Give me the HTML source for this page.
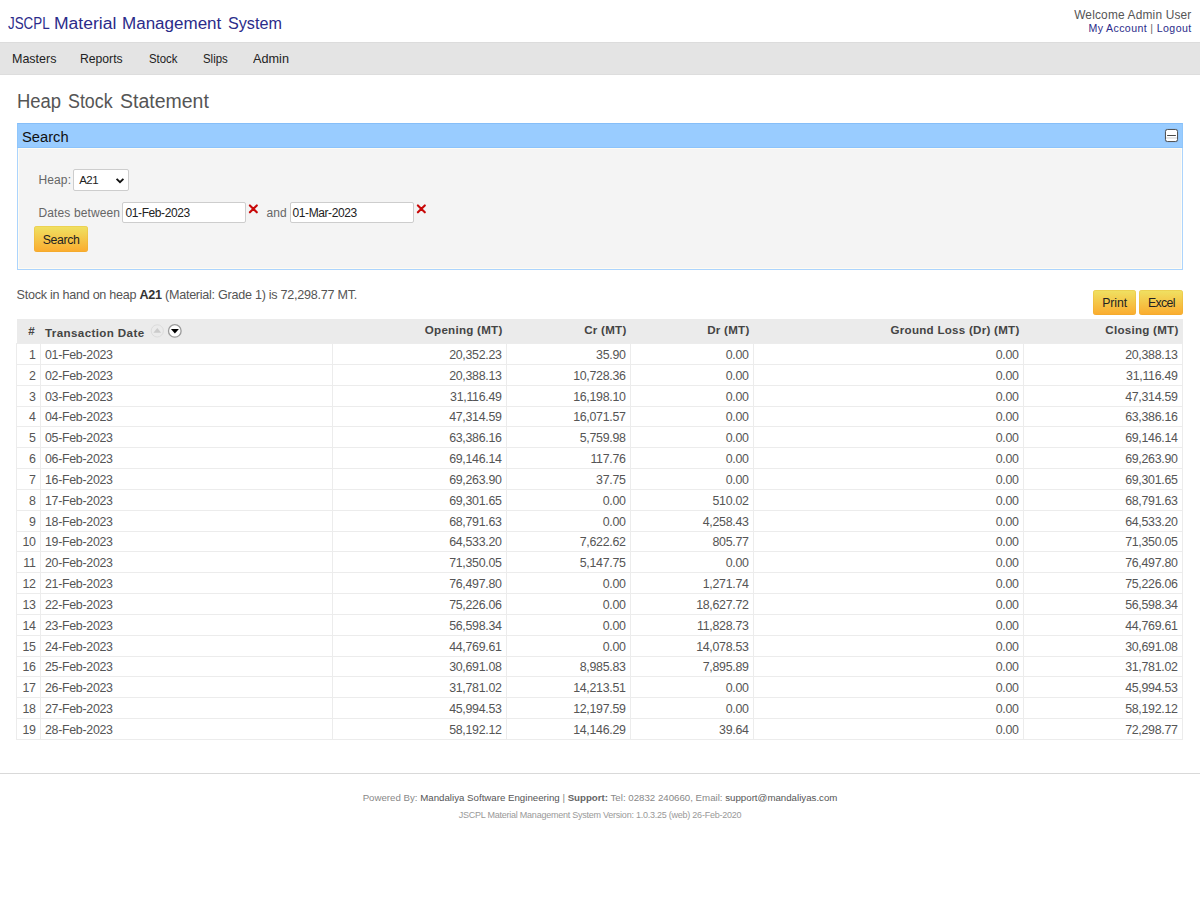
<!DOCTYPE html>
<html><head><meta charset="utf-8"><title>Heap Stock Statement</title>
<style>
*{box-sizing:border-box}
html,body{margin:0;padding:0;background:#fff}
body{font-family:"Liberation Sans",sans-serif;font-size:12px;color:#555;width:1200px;height:900px;position:relative;overflow:hidden}
.t,.abs{position:absolute;white-space:nowrap}
.lk{color:#2b2b8a}
#nav{left:0;top:41.6px;width:1200px;height:33.4px;background:#e4e4e4;border-top:1px solid #dcdcdc;border-bottom:1px solid #dddddd}
#shead{left:16.8px;top:123px;width:1166.2px;height:25px;background:#99ccff;border-top:1px solid #86bef8;border-bottom:1px solid #8cc3fb;border-left:1px solid #90c6fb;border-right:1px solid #90c6fb}
#sbody{left:16.8px;top:148px;width:1166.2px;height:121.5px;background:#f4f4f4;border:1px solid #acd4fd;border-top:none;box-shadow:inset 0 1px 0 #fffcf3,inset 1px 0 0 #fffcf3,inset -1px 0 0 #fffcf3,inset 0 -1px 0 #fffcf3}
#collapse{left:1165px;top:129px;width:13.3px;height:13.4px;background:linear-gradient(#fff 0%,#fff 62%,#e4e4e4 63%,#e9e9e9 80%,#fff 81%);border:1px solid #555;border-radius:2.5px;box-shadow:0 0 0.7px #555}
#collapse i{position:absolute;left:1.2px;top:4.7px;width:8.8px;height:1.7px;background:#4a4a4a;border-radius:1px}
.box{position:absolute;background:#fff;border:1px solid #cdcdcd}
.xic{position:absolute}
.btn{position:absolute;background:linear-gradient(#efe263,#fbab2e);border-radius:3px;box-shadow:inset 0 0 0 0.5px rgba(230,170,40,0.5)}
table{position:absolute;left:16px;top:319.1px;border-collapse:collapse;width:1166px;table-layout:fixed}
th{background:#ebebeb;color:#444;font-weight:bold;font-size:11.6px;letter-spacing:0.25px;height:24.5px;text-align:right;padding:0 4px 2px 4.5px;white-space:nowrap;vertical-align:middle;line-height:12px}
td{height:20.83px;border:1px solid #ececec;font-size:12.4px;letter-spacing:-0.3px;color:#555;text-align:right;padding:2px 4.4px 0 4px;white-space:nowrap;line-height:14px}
td.l,th.l{text-align:left}
#foot{left:0;top:772.8px;width:1200px;height:1.2px;background:#d9d9d9}
.ft{left:0;width:1200px;text-align:center;color:#888}
.ft span{color:#555}
.ft b{color:#666}
</style></head><body>
<div id="nav" class="abs"></div>
<div id="shead" class="abs"></div>
<div id="sbody" class="abs"></div>
<div id="collapse" class="abs"><i></i></div>
<div class="box" style="left:73px;top:169px;width:56px;height:22px;border-radius:2px"></div>
<svg class="abs" style="left:114px;top:176px" width="12" height="9" viewBox="0 0 12 9"><path d="M2.6 2.9 L6 6.1 L9.4 2.9" fill="none" stroke="#111" stroke-width="1.9"/></svg>
<div class="box" style="left:122px;top:202px;width:124px;height:21px;border-radius:2px"></div>
<div class="box" style="left:290px;top:202px;width:124px;height:21px;border-radius:2px"></div>
<svg class="xic" style="left:248px;top:203.5px" width="11" height="10.5" viewBox="0 0 11 10.5"><path d="M1.9 1.4 L8.8 8.3 M8.8 1.4 L1.9 8.3" stroke="#c80808" stroke-width="2.1" stroke-linecap="round"/></svg>
<svg class="xic" style="left:415.5px;top:203.9px" width="11" height="10.5" viewBox="0 0 11 10.5"><path d="M1.9 1.4 L8.8 8.3 M8.8 1.4 L1.9 8.3" stroke="#c80808" stroke-width="2.1" stroke-linecap="round"/></svg>
<div class="btn" style="left:34px;top:226px;width:53.5px;height:26px"></div>
<div class="btn" style="left:1093.3px;top:289.9px;width:42.3px;height:25px"></div>
<div class="btn" style="left:1139.3px;top:289.9px;width:43.9px;height:25px"></div>
<table>
<colgroup><col style="width:24px"><col style="width:292px"><col style="width:174px"><col style="width:124px"><col style="width:123px"><col style="width:270px"><col style="width:159px"></colgroup>
<thead><tr><th style="padding-right:5.5px;padding-bottom:0.5px">#</th><th class=l><span style="position:relative;top:3.2px;letter-spacing:0.38px">Transaction Date</span></th><th>Opening (MT)</th><th>Cr (MT)</th><th>Dr (MT)</th><th>Ground Loss (Dr) (MT)</th><th>Closing (MT)</th></tr></thead>
<tbody>
<tr><td>1</td><td class=l>01-Feb-2023</td><td>20,352.23</td><td>35.90</td><td>0.00</td><td>0.00</td><td>20,388.13</td></tr>
<tr><td>2</td><td class=l>02-Feb-2023</td><td>20,388.13</td><td>10,728.36</td><td>0.00</td><td>0.00</td><td>31,116.49</td></tr>
<tr><td>3</td><td class=l>03-Feb-2023</td><td>31,116.49</td><td>16,198.10</td><td>0.00</td><td>0.00</td><td>47,314.59</td></tr>
<tr><td>4</td><td class=l>04-Feb-2023</td><td>47,314.59</td><td>16,071.57</td><td>0.00</td><td>0.00</td><td>63,386.16</td></tr>
<tr><td>5</td><td class=l>05-Feb-2023</td><td>63,386.16</td><td>5,759.98</td><td>0.00</td><td>0.00</td><td>69,146.14</td></tr>
<tr><td>6</td><td class=l>06-Feb-2023</td><td>69,146.14</td><td>117.76</td><td>0.00</td><td>0.00</td><td>69,263.90</td></tr>
<tr><td>7</td><td class=l>16-Feb-2023</td><td>69,263.90</td><td>37.75</td><td>0.00</td><td>0.00</td><td>69,301.65</td></tr>
<tr><td>8</td><td class=l>17-Feb-2023</td><td>69,301.65</td><td>0.00</td><td>510.02</td><td>0.00</td><td>68,791.63</td></tr>
<tr><td>9</td><td class=l>18-Feb-2023</td><td>68,791.63</td><td>0.00</td><td>4,258.43</td><td>0.00</td><td>64,533.20</td></tr>
<tr><td>10</td><td class=l>19-Feb-2023</td><td>64,533.20</td><td>7,622.62</td><td>805.77</td><td>0.00</td><td>71,350.05</td></tr>
<tr><td>11</td><td class=l>20-Feb-2023</td><td>71,350.05</td><td>5,147.75</td><td>0.00</td><td>0.00</td><td>76,497.80</td></tr>
<tr><td>12</td><td class=l>21-Feb-2023</td><td>76,497.80</td><td>0.00</td><td>1,271.74</td><td>0.00</td><td>75,226.06</td></tr>
<tr><td>13</td><td class=l>22-Feb-2023</td><td>75,226.06</td><td>0.00</td><td>18,627.72</td><td>0.00</td><td>56,598.34</td></tr>
<tr><td>14</td><td class=l>23-Feb-2023</td><td>56,598.34</td><td>0.00</td><td>11,828.73</td><td>0.00</td><td>44,769.61</td></tr>
<tr><td>15</td><td class=l>24-Feb-2023</td><td>44,769.61</td><td>0.00</td><td>14,078.53</td><td>0.00</td><td>30,691.08</td></tr>
<tr><td>16</td><td class=l>25-Feb-2023</td><td>30,691.08</td><td>8,985.83</td><td>7,895.89</td><td>0.00</td><td>31,781.02</td></tr>
<tr><td>17</td><td class=l>26-Feb-2023</td><td>31,781.02</td><td>14,213.51</td><td>0.00</td><td>0.00</td><td>45,994.53</td></tr>
<tr><td>18</td><td class=l>27-Feb-2023</td><td>45,994.53</td><td>12,197.59</td><td>0.00</td><td>0.00</td><td>58,192.12</td></tr>
<tr><td>19</td><td class=l>28-Feb-2023</td><td>58,192.12</td><td>14,146.29</td><td>39.64</td><td>0.00</td><td>72,298.77</td></tr>
</tbody></table>
<svg class="abs" style="left:149px;top:323px" width="34" height="16" viewBox="0 0 34 16">
<circle cx="8.3" cy="7.9" r="6.1" fill="none" stroke="#dcdcdc" stroke-width="1"/>
<path d="M4.4 9.8 L8.3 4.9 L12.2 9.8 Z" fill="#cbcbcb"/>
<circle cx="25.8" cy="7.9" r="6.3" fill="#fff" stroke="#9a9a9a" stroke-width="1.3"/>
<path d="M21.9 6.1 L29.9 6.1 L25.9 10.4 Z" fill="#000"/>
</svg>
<div class="t" style="right:8.5px;text-align:right;top:10.13px;font-size:11.9px;line-height:11.9px;color:#555;letter-spacing:0.18px">Welcome Admin User</div>
<div class="t" style="right:8.5px;text-align:right;top:23.03px;font-size:10.6px;line-height:10.6px;color:#2b2b8a;letter-spacing:0.38px"><span class=lk>My Account</span> <span style="color:#666">|</span> <span class=lk>Logout</span></div>
<div class="t" style="left:38.5px;top:173.84px;font-size:12px;line-height:12px;color:#666;letter-spacing:0.12px">Heap:</div>
<div class="t" style="left:79.2px;top:174.57px;font-size:11.5px;line-height:11.5px;color:#222;letter-spacing:-0.5px">A21</div>
<div class="t" style="left:38.5px;top:206.54px;font-size:12px;line-height:12px;color:#666;letter-spacing:0.12px">Dates between</div>
<div class="t" style="left:125.5px;top:206.54px;font-size:12px;line-height:12px;color:#222;letter-spacing:-0.4px">01-Feb-2023</div>
<div class="t" style="left:266.5px;top:206.54px;font-size:12px;line-height:12px;color:#666;letter-spacing:0.12px">and</div>
<div class="t" style="left:292.5px;top:206.54px;font-size:12px;line-height:12px;color:#222;letter-spacing:-0.4px">01-Mar-2023</div>
<div class="t" style="left:42.8px;top:233.59px;font-size:12.3px;line-height:12.3px;color:#222;letter-spacing:-0.4px">Search</div>
<div class="t" style="left:16.6px;top:289.03px;font-size:12.6px;line-height:12.6px;color:#555;letter-spacing:-0.27px">Stock in hand on heap <b style="color:#333">A21</b> (Material: Grade 1) is 72,298.77 MT.</div>
<div class="t" style="left:1102.2px;top:296.79px;font-size:12.3px;line-height:12.3px;color:#222;letter-spacing:-0.1px">Print</div>
<div class="t" style="left:1148.1px;top:296.79px;font-size:12.3px;line-height:12.3px;color:#222;letter-spacing:-0.7px">Excel</div>
<div class="t" style="left:0;width:1200px;text-align:center;top:792.79px;font-size:9.7px;line-height:9.7px;letter-spacing:0px;color:#888">Powered By: <span style="color:#555">Mandaliya Software Engineering</span> | <b style="color:#666">Support:</b> Tel: 02832 240660, Email: <span style="color:#555">support@mandaliyas.com</span></div>
<div class="t" style="left:0;width:1200px;text-align:center;top:810.58px;font-size:9px;line-height:9px;letter-spacing:-0.24px;color:#999">JSCPL Material Management System Version: 1.0.3.25 (web) 26-Feb-2020</div>
<div class="t" style="left:7.50px;top:15.06px;font-size:17.3px;line-height:17.3px;color:#2b2b8a;font-weight:normal;transform-origin:0 0;transform:scaleX(0.7734);">JSCPL</div>
<div class="t" style="left:54.49px;top:15.06px;font-size:17.3px;line-height:17.3px;color:#2b2b8a;font-weight:normal;transform-origin:0 0;transform:scaleX(1.0147);">Material</div>
<div class="t" style="left:121.52px;top:15.06px;font-size:17.3px;line-height:17.3px;color:#2b2b8a;font-weight:normal;transform-origin:0 0;transform:scaleX(0.9843);">Management</div>
<div class="t" style="left:227.50px;top:15.06px;font-size:17.3px;line-height:17.3px;color:#2b2b8a;font-weight:normal;transform-origin:0 0;transform:scaleX(0.9350);">System</div>
<div class="t" style="left:11.57px;top:51.66px;font-size:13.4px;line-height:13.4px;color:#222;font-weight:normal;transform-origin:0 0;transform:scaleX(0.9324);">Masters</div>
<div class="t" style="left:80.34px;top:51.66px;font-size:13.4px;line-height:13.4px;color:#222;font-weight:normal;transform-origin:0 0;transform:scaleX(0.9093);">Reports</div>
<div class="t" style="left:148.75px;top:51.66px;font-size:13.4px;line-height:13.4px;color:#222;font-weight:normal;transform-origin:0 0;transform:scaleX(0.8507);">Stock</div>
<div class="t" style="left:202.50px;top:51.66px;font-size:13.4px;line-height:13.4px;color:#222;font-weight:normal;transform-origin:0 0;transform:scaleX(0.8524);">Slips</div>
<div class="t" style="left:252.50px;top:51.66px;font-size:13.4px;line-height:13.4px;color:#222;font-weight:normal;transform-origin:0 0;transform:scaleX(0.9465);">Admin</div>
<div class="t" style="left:16.98px;top:90.57px;font-size:20px;line-height:20px;color:#555;font-weight:normal;transform-origin:0 0;transform:scaleX(0.9231);">Heap</div>
<div class="t" style="left:67.75px;top:90.57px;font-size:20px;line-height:20px;color:#555;font-weight:normal;transform-origin:0 0;transform:scaleX(0.8918);">Stock</div>
<div class="t" style="left:119.90px;top:90.57px;font-size:20px;line-height:20px;color:#555;font-weight:normal;transform-origin:0 0;transform:scaleX(0.9748);">Statement</div>
<div class="t" style="left:22.10px;top:129.13px;font-size:15.2px;line-height:15.2px;color:#111;font-weight:normal;transform-origin:0 0;transform:scaleX(0.9691);">Search</div>

<div id="foot" class="abs"></div>
</body></html>
